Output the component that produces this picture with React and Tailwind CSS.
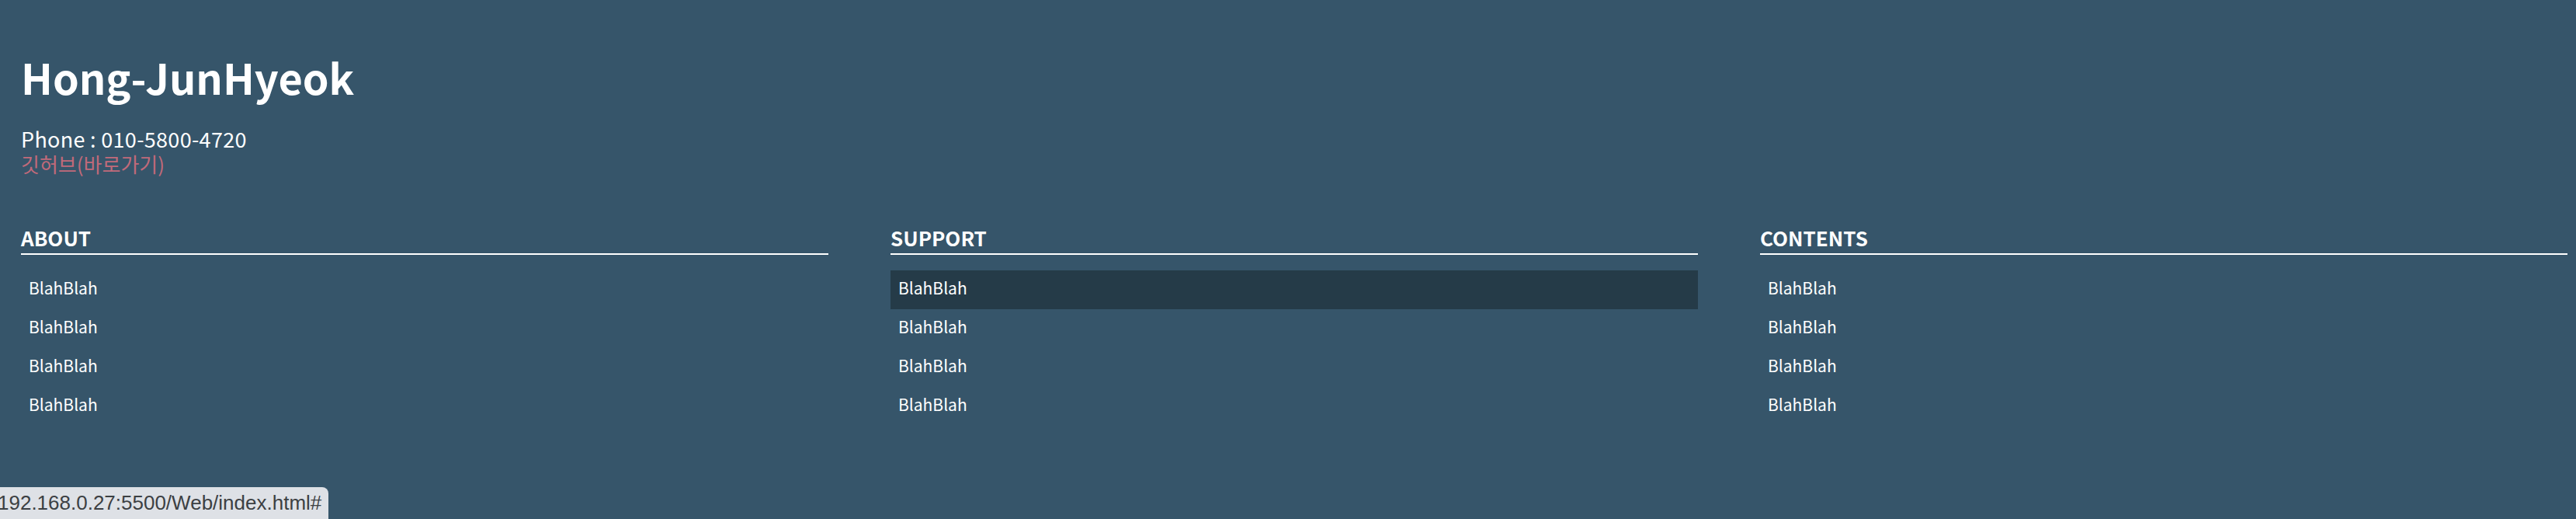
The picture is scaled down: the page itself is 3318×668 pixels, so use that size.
import React from "react";

const font = { fontFamily: '"Noto Sans CJK KR", "Noto Sans", sans-serif' };

const sections = [
  { id: "about", title: "ABOUT" },
  { id: "support", title: "SUPPORT", active: 0 },
  { id: "contents", title: "CONTENTS" },
];

const items = ["BlahBlah", "BlahBlah", "BlahBlah", "BlahBlah"];

const Column = ({ section }) => {
  return (
    <div className="flex flex-col">
      <h3 className="text-[26px] leading-[32px] font-bold text-white pb-[4px] border-b-2 border-white">
        {section.title}
      </h3>
      <ul className="mt-[20px] flex flex-col">
        {items.map((item, i) => (
          <li
            key={i}
            className={`h-[50px] leading-[44px] pl-[10px] text-[21px] text-white ${
              section.active === i ? "bg-[#253b48]" : ""
            }`}
          >
            {item}
          </li>
        ))}
      </ul>
    </div>
  );
};

export default function App() {
  return (
    <div className="relative min-h-screen bg-[#36556a] overflow-hidden" style={font}>
      <div className="pl-[27px] pr-[11px] pt-[67px]">
        {/* Header */}
        <h1 className="text-[54px] leading-[64px] font-bold text-white">Hong-JunHyeok</h1>
        <div className="mt-[32px] flex flex-col">
          <p className="text-[27px] leading-[32px] text-white tracking-[0.3px]">Phone : 010-5800-4720</p>
          <a href="#" className="text-[26px] leading-[32px] text-[#c16a7a]">
            깃허브(바로가기)
          </a>
        </div>

        {/* Footer columns */}
        <div className="mt-[63px] grid grid-cols-3 gap-x-[80px]">
          {sections.map((section) => (
            <Column key={section.id} section={section} />
          ))}
        </div>
      </div>

      {/* Browser status bubble */}
      <div className="absolute left-0 bottom-0 h-[41px] w-[423px] bg-[#dee1e6] rounded-tr-[8px] overflow-hidden">
        <span
          className="block -ml-[3px] text-[26px] leading-[41px] text-[#3c4043] whitespace-nowrap"
          style={{ fontFamily: '"Liberation Sans", Arial, sans-serif' }}
        >
          192.168.0.27:5500/Web/index.html#
        </span>
      </div>
    </div>
  );
}
